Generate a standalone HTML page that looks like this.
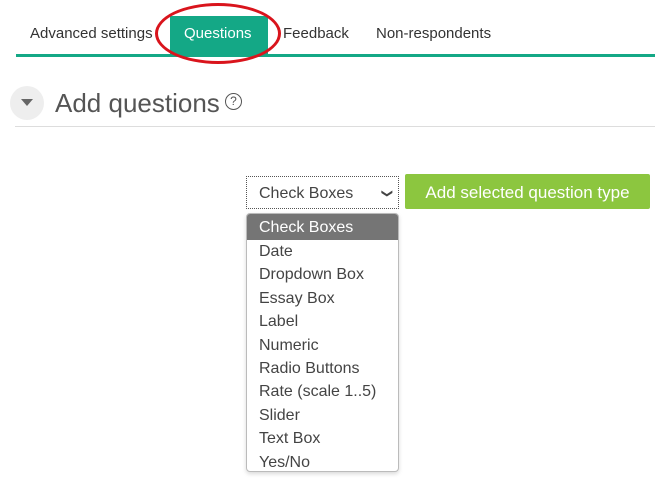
<!DOCTYPE html>
<html><head><style>
body{margin:0;width:655px;height:480px;background:#fff;font-family:"Liberation Sans",sans-serif;position:relative;overflow:hidden;color:#444}
.a{position:absolute}
.tab{position:absolute;top:25px;font-size:15px;color:#333}
</style></head><body>
<div class="a" style="left:16px;top:54px;width:639px;height:3px;background:#14a886"></div>
<div class="a" style="left:170px;top:16px;width:98px;height:38px;background:#14a886"></div>
<div class="tab" style="left:30px">Advanced settings</div>
<div class="tab" style="left:184px;color:#fff">Questions</div>
<div class="tab" style="left:283px">Feedback</div>
<div class="tab" style="left:376px">Non-respondents</div>
<div class="a" style="left:155px;top:3px;width:126px;height:61px;border:3px solid #d9141c;border-radius:50%;box-sizing:border-box"></div>
<div class="a" style="left:10px;top:86px;width:34px;height:34px;border-radius:50%;background:#eee"></div>
<div class="a" style="left:21px;top:99px;width:0;height:0;border-left:6px solid transparent;border-right:6px solid transparent;border-top:7px solid #666"></div>
<div class="a" style="left:55px;top:88px;font-size:26px;color:#555">Add questions</div>
<div class="a" style="left:225px;top:93px;width:17px;height:17px;border:1.5px solid #555;border-radius:50%;box-sizing:border-box;font-size:12px;text-align:center;line-height:14px;color:#555">?</div>
<div class="a" style="left:15px;top:126px;width:640px;height:1px;background:#ddd"></div>
<div class="a" style="left:246px;top:176px;width:153px;height:33px;border:1px dotted #555;box-sizing:border-box;font-size:16px;line-height:33px;padding-left:12px;color:#444">Check Boxes<span style="position:absolute;right:7px;top:0;font-size:11px;transform:rotate(90deg)">&#10095;</span></div>
<div class="a" style="left:405px;top:174px;width:245px;height:35px;background:#8cc63f;border-radius:2px;color:#fff;font-size:17px;line-height:37px;text-align:center">Add selected question type</div>
<div class="a" style="left:246px;top:213px;width:153px;height:259px;border:1px solid #bbb;border-radius:4px;box-sizing:border-box;box-shadow:0 2px 4px rgba(0,0,0,.15);font-size:16px;line-height:23.4px;background:#fff">
<div style="background:#757575;color:#fff;padding-left:12px;border-radius:3px 3px 0 0;line-height:24px;padding-top:2px">Check Boxes</div>
<div style="padding-left:12px">Date<br>Dropdown Box<br>Essay Box<br>Label<br>Numeric<br>Radio Buttons<br>Rate (scale 1..5)<br>Slider<br>Text Box<br>Yes/No</div>
</div>
</body></html>
